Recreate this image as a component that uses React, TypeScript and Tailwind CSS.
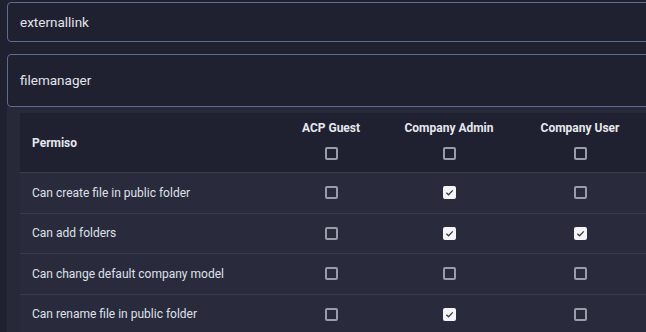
import React from "react";

const cols = [
  { name: "ACP Guest", w: "w-[118px]" },
  { name: "Company Admin", w: "w-[118px]" },
  { name: "Company User", w: "w-[144px]" },
];

const rows: { label: string; v: boolean[] }[] = [
  { label: "Can create file in public folder", v: [false, true, false] },
  { label: "Can add folders", v: [false, true, true] },
  { label: "Can change default company model", v: [false, false, false] },
  { label: "Can rename file in public folder", v: [false, true, false] },
];

function Box({ checked }: { checked: boolean }) {
  if (checked) {
    return (
      <div className="w-[13px] h-[13px] rounded-[2px] bg-[#f4f4f6] flex items-center justify-center">
        <svg width="9" height="9" viewBox="0 0 10 10">
          <path d="M1.5 5.2 L4 7.5 L8.6 2.6" fill="none" stroke="#3a3c4a" strokeWidth="1.5" />
        </svg>
      </div>
    );
  }
  return <div className="w-[13px] h-[13px] rounded-[2px] border-2 border-[#9a9caa]" />;
}

export default function App() {
  return (
    <div
      className="w-[646px] h-[332px] overflow-hidden bg-[#1f2030] pl-[7px] pt-[2px]"
      style={{ fontFamily: "Roboto, 'Noto Sans', sans-serif" }}
    >
      <div className="w-[700px] h-[40px] border border-[#5d6c93] rounded-[4px] pl-[12px] flex items-center text-[13.5px] text-[#e3e5ec]">
        externallink
      </div>
      <div className="mt-[12px] w-[700px] h-[53px] border border-[#5d6c93] rounded-[4px] pl-[12px] flex items-center text-[13.5px] text-[#e3e5ec]">
        filemanager
      </div>
      <div className="w-[700px] bg-[#272939] pl-[13px] pt-[6px]">
        <div className="flex h-[60px] bg-[#1f2030] border-b border-[#393b4c]">
          <div className="w-[252px] pl-[12px] flex items-center text-[12px] font-bold text-[#e6e8ee]">Permiso</div>
          {cols.map((c) => (
            <div key={c.name} className={`${c.w} flex flex-col items-center pt-[8px] gap-[12px]`}>
              <div className="text-[12px] font-bold text-[#e6e8ee] leading-[14px]">{c.name}</div>
              <Box checked={false} />
            </div>
          ))}
        </div>
        {rows.map((r) => (
          <div key={r.label} className="flex h-[40.5px] bg-[#292b3d] border-b border-[#393b4c]">
            <div className="w-[252px] pl-[12px] flex items-center text-[12px] text-[#dfe1e8]">{r.label}</div>
            {r.v.map((v, i) => (
              <div key={i} className={`${cols[i].w} flex items-center justify-center`}>
                <Box checked={v} />
              </div>
            ))}
          </div>
        ))}
      </div>
    </div>
  );
}
